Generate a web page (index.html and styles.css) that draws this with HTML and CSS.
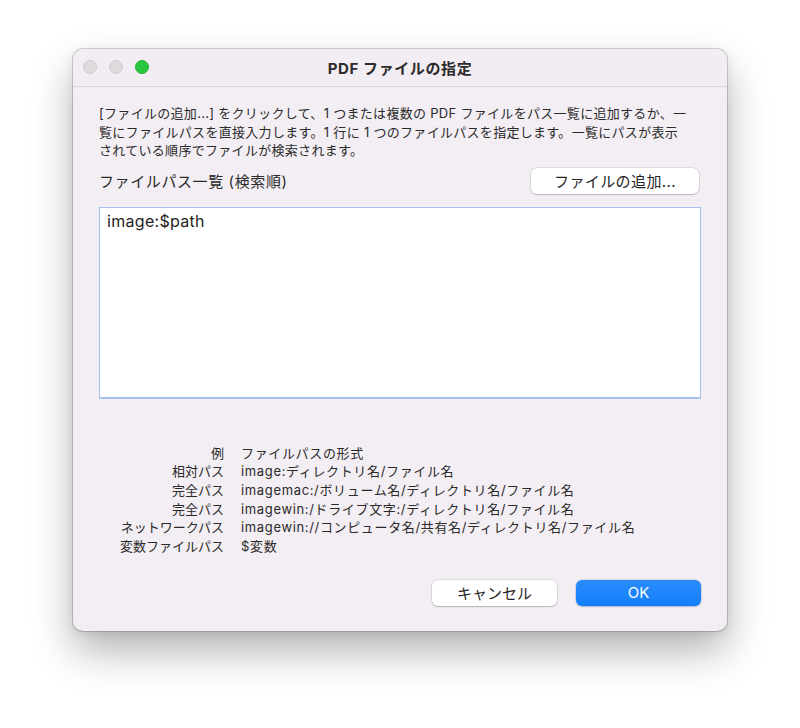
FILE: index.html
```html
<!DOCTYPE html>
<html lang="ja">
<head>
<meta charset="utf-8">
<title>PDF ファイルの指定</title>
<link rel="stylesheet" href="styles.css">
</head>
<body>
<div class="window">
  <div class="titlebar">
    <div class="lights">
      <span class="light gray"></span>
      <span class="light gray"></span>
      <span class="light green"></span>
    </div>
    <div class="title">PDF ファイルの指定</div>
  </div>
  <div class="content">
    <p class="desc">[ファイルの追加...] をクリックして、1 つまたは複数の PDF ファイルをパス一覧に追加するか、一<br>覧にファイルパスを直接入力します。1 行に 1 つのファイルパスを指定します。一覧にパスが表示<br>されている順序でファイルが検索されます。</p>
    <div class="listhead">
      <span class="label">ファイルパス一覧 (検索順)</span>
      <button class="btn add">ファイルの追加...</button>
    </div>
    <div class="textarea">image:$path</div>
    <div class="examples">
      <span class="k">例</span><span class="v">ファイルパスの形式</span>
      <span class="k">相対パス</span><span class="v">image:ディレクトリ名/ファイル名</span>
      <span class="k">完全パス</span><span class="v">imagemac:/ボリューム名/ディレクトリ名/ファイル名</span>
      <span class="k">完全パス</span><span class="v">imagewin:/ドライブ文字:/ディレクトリ名/ファイル名</span>
      <span class="k">ネットワークパス</span><span class="v">imagewin://コンピュータ名/共有名/ディレクトリ名/ファイル名</span>
      <span class="k">変数ファイルパス</span><span class="v">$変数</span>
    </div>
    <div class="actions">
      <button class="btn cancel">キャンセル</button>
      <button class="btn ok">OK</button>
    </div>
  </div>
</div>
</body>
</html>
```
FILE: styles.css
```css
html, body {
  margin: 0;
  padding: 0;
  background: #ffffff;
}
body {
  font-family: Inter, "Noto Sans CJK JP", sans-serif;
  color: #262626;
  padding-top: 49px;
  padding-left: 73px;
  height: 728px;
  box-sizing: border-box;
  overflow: hidden;
}
.window {
  width: 654px;
  height: 582px;
  box-sizing: border-box;
  background: #f3eef3;
  border-radius: 10px;
  box-shadow: 0 0 0 1px rgba(0, 0, 0, 0.16), 0 20px 40px rgba(0, 0, 0, 0.3), 0 2px 8px rgba(0, 0, 0, 0.08);
  overflow: hidden;
}
.titlebar {
  position: relative;
  height: 37px;
  border-bottom: 1px solid #dcd7dc;
  background: #f2edf2;
  display: flex;
  align-items: center;
  justify-content: center;
}
.lights {
  position: absolute;
  left: 10px;
  top: 11px;
  display: flex;
  gap: 12px;
}
.light {
  width: 14px;
  height: 14px;
  border-radius: 50%;
  box-sizing: border-box;
}
.light.gray {
  background: #dedade;
  border: 1px solid #cfcbcf;
}
.light.green {
  background: #29c73f;
  border: 1px solid #22b335;
}
.title {
  font-size: 15px;
  font-weight: 700;
  letter-spacing: 0.6px;
  color: #2b2b2b;
}
.content {
  padding: 17px 26px 0 26px;
}
.desc {
  margin: 0;
  font-size: 13px;
  line-height: 18.5px;
  letter-spacing: 0.3px;
  color: #2a2a2a;
  white-space: nowrap;
}
.listhead {
  display: flex;
  justify-content: space-between;
  align-items: center;
  margin-top: 8px;
  padding-right: 2px;
}
.label {
  font-size: 15px;
  letter-spacing: 0.6px;
  color: #2a2a2a;
}
.btn {
  font-family: Inter, "Noto Sans CJK JP", sans-serif;
  font-size: 15px;
  height: 26px;
  border-radius: 6px;
  border: none;
  padding: 0;
  color: #262626;
  background: #ffffff;
  box-shadow: 0 0 0 0.5px rgba(0, 0, 0, 0.16), 0 1px 1.5px rgba(0, 0, 0, 0.18);
}
.btn.add {
  width: 168px;
  letter-spacing: 0.4px;
}
.textarea {
  margin-top: 13px;
  height: 192px;
  box-sizing: border-box;
  background: #ffffff;
  border: 1px solid #a8c0ec;
  border-bottom-width: 2px;
  padding: 3px 7px;
  font-size: 16px;
  letter-spacing: 0.3px;
  color: #1e1e1e;
  line-height: 20px;
}
.examples {
  margin-top: 45px;
  display: grid;
  grid-template-columns: 125px auto;
  column-gap: 17px;
  font-size: 13px;
  line-height: 18.7px;
  color: #2a2a2a;
}
.examples .k {
  text-align: right;
}
.examples .v {
  letter-spacing: 0.65px;
}
.actions {
  margin-top: 24px;
  display: flex;
  justify-content: flex-end;
  gap: 19px;
}
.btn.cancel, .btn.ok {
  width: 125px;
}
.btn.ok {
  background: linear-gradient(#2a8cfc, #137ffb);
  color: #ffffff;
  box-shadow: 0 0 0 0.5px rgba(0, 60, 180, 0.25), 0 1px 1.5px rgba(0, 0, 0, 0.15);
}
```
